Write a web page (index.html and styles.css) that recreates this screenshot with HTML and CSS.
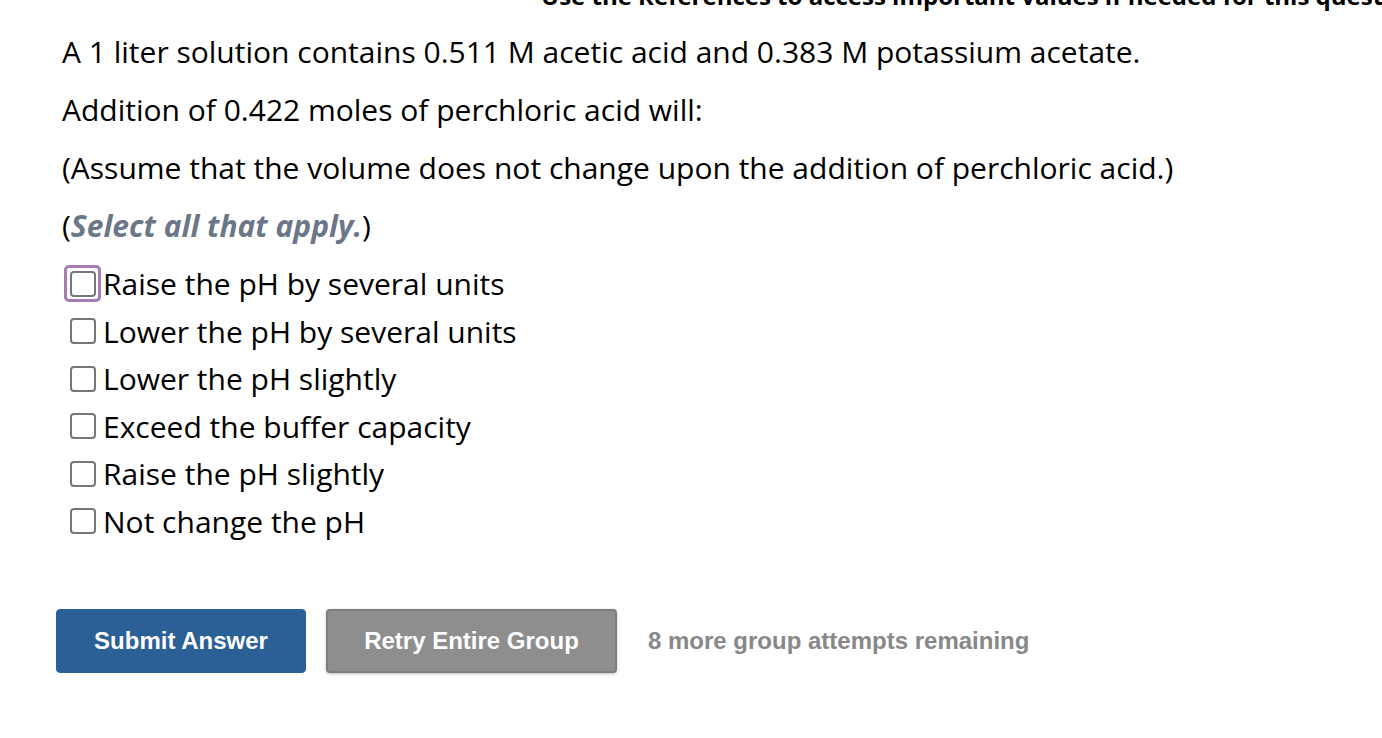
FILE: index.html
```html
<!DOCTYPE html>
<html>
<head>
<meta charset="utf-8">
<link rel="stylesheet" href="styles.css">
</head>
<body>
<div class="refs"><span class="refs-text">Use the References to access important values if needed for this question.</span></div>
<main class="question">
  <p class="para">A 1 liter solution contains 0.511 M acetic acid and 0.383 M potassium acetate.</p>
  <p class="para">Addition of 0.422 moles of perchloric acid will:</p>
  <p class="para">(Assume that the volume does not change upon the addition of perchloric acid.)</p>
  <p class="para">(<em class="hint">Select all that apply.</em>)</p>
  <ul class="options">
    <li class="option"><span class="box focused"><span class="box-inner"></span></span><span>Raise the pH by several units</span></li>
    <li class="option"><span class="box"><span class="box-inner"></span></span><span>Lower the pH by several units</span></li>
    <li class="option"><span class="box"><span class="box-inner"></span></span><span>Lower the pH slightly</span></li>
    <li class="option"><span class="box"><span class="box-inner"></span></span><span>Exceed the buffer capacity</span></li>
    <li class="option"><span class="box"><span class="box-inner"></span></span><span>Raise the pH slightly</span></li>
    <li class="option"><span class="box"><span class="box-inner"></span></span><span>Not change the pH</span></li>
  </ul>
  <div class="actions">
    <button class="btn btn-primary">Submit Answer</button>
    <button class="btn btn-grey">Retry Entire Group</button>
    <span class="attempts">8 more group attempts remaining</span>
  </div>
</main>
</body>
</html>
```
FILE: styles.css
```css
html, body {
  margin: 0;
  padding: 0;
  background: #fff;
}
body {
  font-family: "Open Sans", "DejaVu Sans", sans-serif;
  color: #000;
  width: 1382px;
  height: 738px;
  overflow: hidden;
}
.refs {
  height: 11px;
  overflow: hidden;
  white-space: nowrap;
  padding-left: 541px;
}
.refs-text {
  display: block;
  font-weight: 700;
  font-size: 24px;
  line-height: 33px;
  margin-top: -21px;
  color: #000;
}
.question {
  padding-left: 62px;
  padding-top: 17px;
}
.para {
  margin: 0 0 10px 0;
  font-size: 30px;
  line-height: 48px;
}
.hint {
  font-weight: 700;
  font-style: italic;
  color: #6b7789;
}
.options {
  list-style: none;
  margin: 0;
  padding: 0;
}
.option {
  display: flex;
  align-items: center;
  font-size: 30px;
  line-height: 47.5px;
  height: 47.5px;
}
.box {
  width: 37px;
  height: 37px;
  display: flex;
  align-items: center;
  justify-content: center;
  border: 3px solid transparent;
  border-radius: 5px;
  box-sizing: border-box;
  margin-left: 2px;
  margin-right: 2px;
  flex: none;
}
.box.focused {
  border-color: #a57cb4;
}
.box-inner {
  width: 26px;
  height: 26px;
  box-sizing: border-box;
  border: 2px solid #767676;
  border-radius: 4px;
  background: #fff;
}
.actions {
  display: flex;
  align-items: center;
  margin-top: 64px;
  margin-left: -6px;
}
.btn {
  font-family: "Liberation Sans", Arial, sans-serif;
  font-weight: 700;
  font-size: 24px;
  color: #fff;
  height: 64px;
  border-radius: 4px;
  cursor: pointer;
  box-sizing: border-box;
}
.btn-primary {
  width: 250px;
  background: #2a6095;
  border: 1px solid #2a6095;
  margin-right: 20px;
}
.btn-grey {
  width: 291px;
  background: #8e8e8e;
  border: 2px solid #7d7d7d;
  box-shadow: 0 1px 3px rgba(0,0,0,0.25);
  margin-right: 31px;
}
.attempts {
  font-family: "Liberation Sans", Arial, sans-serif;
  font-weight: 700;
  font-size: 24px;
  color: #888;
}
```
